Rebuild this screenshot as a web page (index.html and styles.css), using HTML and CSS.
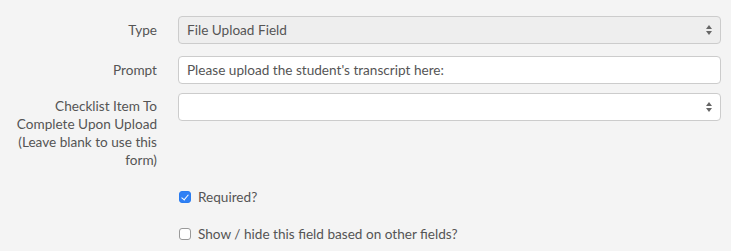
FILE: index.html
```html
<!DOCTYPE html>
<html lang="en">
<head>
<meta charset="UTF-8">
<title>Field settings</title>
<link rel="stylesheet" href="styles.css">
</head>
<body>

<form class="field-form">
  <div class="row row-type">
    <label class="label" for="type">Type</label>
    <div class="control">
      <div class="select disabled" id="type">File Upload Field<span class="arrows"></span></div>
    </div>
  </div>

  <div class="row row-prompt">
    <label class="label" for="prompt">Prompt</label>
    <div class="control">
      <input class="text" id="prompt" type="text" value="Please upload the student's transcript here:">
    </div>
  </div>

  <div class="row row-checklist">
    <label class="label label-multi" for="checklist">Checklist Item To Complete Upon Upload (Leave blank to use this form)</label>
    <div class="control">
      <div class="select" id="checklist"><span class="arrows"></span></div>
    </div>
  </div>

  <div class="row row-check">
    <div class="label"></div>
    <label class="check"><span class="box checked"></span>Required?</label>
  </div>

  <div class="row row-check">
    <div class="label"></div>
    <label class="check"><span class="box"></span>Show / hide this field based on other fields?</label>
  </div>
</form>

</body>
</html>
```

FILE: styles.css
```css
body {
  margin: 0;
  background-color: #f4f4f4;
  font-family: Lato, "Open Sans", sans-serif;
  font-size: 13.6px;
  color: #555;
}
.field-form {
  padding: 16px 10px 0 0;
}
.row {
  display: grid;
  grid-template-columns: 157px 1fr;
  column-gap: 21px;
}
.row-type { margin-bottom: 12px; }
.row-prompt { margin-bottom: 9px; }
.row-checklist { margin-bottom: 19px; }
.row-check { margin-bottom: 19px; }
.row-check:last-child { margin-bottom: 0; }
.label {
  padding-left: 10px;
  text-align: right;
  line-height: 28px;
}
.label-multi {
  line-height: 18px;
  padding-top: 4px;
}
.select,
.text {
  position: relative;
  box-sizing: border-box;
  width: 100%;
  height: 28px;
  padding: 0 24px 0 8px;
  border: 1px solid #ccc;
  border-radius: 4px;
  background: #fff;
  font: inherit;
  color: #555;
  line-height: 26px;
}
.select.disabled { background: #eee; }
.text { outline: none; }
.arrows {
  position: absolute;
  right: 7px;
  top: 8px;
  width: 7px;
  height: 10px;
}
.arrows::before,
.arrows::after {
  content: "";
  position: absolute;
  left: 0;
  border-left: 3.5px solid transparent;
  border-right: 3.5px solid transparent;
}
.arrows::before {
  top: 0;
  border-bottom: 4px solid #666;
}
.arrows::after {
  bottom: 0;
  border-top: 4px solid #666;
}
.check {
  display: flex;
  align-items: center;
  gap: 7px;
  line-height: 18px;
  padding-left: 1px;
}
.box {
  box-sizing: border-box;
  width: 12px;
  height: 12px;
  border: 1px solid #999;
  border-radius: 3px;
  background: #fff;
  position: relative;
}
.box.checked {
  border-color: #2a7cf0;
  background: #2f80f5;
}
.box.checked::after {
  content: "";
  position: absolute;
  left: 3px;
  top: 1px;
  width: 3px;
  height: 6px;
  border: solid #fff;
  border-width: 0 1.5px 1.5px 0;
  transform: rotate(40deg);
}
```
